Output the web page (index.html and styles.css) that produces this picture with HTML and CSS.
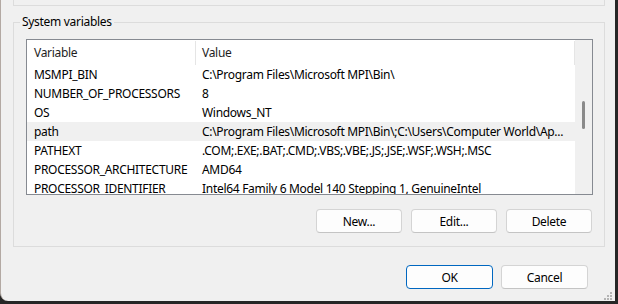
FILE: index.html
```html
<!DOCTYPE html>
<html lang="en">
<head>
  <meta charset="UTF-8">
  <meta name="viewport" content="width=device-width, initial-scale=1.0">
  <title>Environment Variables</title>
  <link rel="stylesheet" href="styles.css">
</head>
<body>
  <div class="window">
    <div class="group-top"></div>

    <fieldset class="group">
      <legend>System variables</legend>

      <div class="listview">
        <div class="list-main">
          <div class="list-header">
            <div class="col-name">Variable</div>
            <div class="col-value">Value</div>
          </div>
          <div class="row"><span class="col-name">MSMPI_BIN</span><span class="col-value">C:\Program Files\Microsoft MPI\Bin\</span></div>
          <div class="row"><span class="col-name">NUMBER_OF_PROCESSORS</span><span class="col-value">8</span></div>
          <div class="row"><span class="col-name">OS</span><span class="col-value">Windows_NT</span></div>
          <div class="row selected"><span class="col-name">path</span><span class="col-value">C:\Program Files\Microsoft MPI\Bin\;C:\Users\Computer World\Ap...</span></div>
          <div class="row"><span class="col-name">PATHEXT</span><span class="col-value">.COM;.EXE;.BAT;.CMD;.VBS;.VBE;.JS;.JSE;.WSF;.WSH;.MSC</span></div>
          <div class="row"><span class="col-name">PROCESSOR_ARCHITECTURE</span><span class="col-value">AMD64</span></div>
          <div class="row"><span class="col-name">PROCESSOR_IDENTIFIER</span><span class="col-value">Intel64 Family 6 Model 140 Stepping 1, GenuineIntel</span></div>
        </div>
        <div class="scrollbar"><div class="thumb"></div></div>
      </div>

      <div class="buttons">
        <button class="btn">New...</button>
        <button class="btn">Edit...</button>
        <button class="btn">Delete</button>
      </div>
    </fieldset>

    <div class="dialog-buttons">
      <button class="btn default">OK</button>
      <button class="btn">Cancel</button>
    </div>

    <svg class="grip" width="9" height="9" viewBox="0 0 9 9">
      <rect x="7" y="1" width="2" height="2" fill="#b4b4b4"/>
      <rect x="4" y="4" width="2" height="2" fill="#b4b4b4"/>
      <rect x="7" y="4" width="2" height="2" fill="#b4b4b4"/>
      <rect x="1" y="7" width="2" height="2" fill="#b4b4b4"/>
      <rect x="4" y="7" width="2" height="2" fill="#b4b4b4"/>
      <rect x="7" y="7" width="2" height="2" fill="#b4b4b4"/>
    </svg>
  </div>
</body>
</html>
```

FILE: styles.css
```css
html, body {
  margin: 0;
  height: 100%;
  background-color: #262626;
  overflow: hidden;
}
body {
  font-family: 'Noto Sans', 'Open Sans', sans-serif;
  font-size: 12px;
  letter-spacing: -0.3px;
  color: #000;
}
.window {
  position: relative;
  width: 614px;
  height: 301px;
  background-color: #f0f0f0;
  border-left: 1px solid #b3a9a3;
  border-bottom-left-radius: 8px;
}
.group-top {
  height: 5px;
  margin: 0 10px 0 12px;
  border: 1px solid #dcdcdc;
  border-top: none;
}
.group {
  margin: 8px 10px 0 12px;
  padding: 9px 11px 13px 12px;
  border: 1px solid #dcdcdc;
  min-width: 0;
}
.group legend {
  line-height: 16px;
  padding: 0 2px;
  margin-left: -6px;
  color: #000;
}
.listview {
  display: flex;
  height: 154px;
  border: 1px solid #868a91;
  background-color: #fff;
}
.list-main {
  width: 548px;
  overflow: hidden;
}
.list-header {
  display: flex;
  height: 25px;
  color: #1e1e1e;
}
.list-header .col-name,
.list-header .col-value {
  margin-top: 1px;
  line-height: 23px;
  border-right: 1px solid #e5e5e5;
}
.list-header .col-name {
  width: 161px;
}
.list-header .col-value {
  width: 372px;
}
.col-name {
  padding-left: 7px;
  flex-shrink: 0;
}
.col-value {
  padding-left: 6px;
  white-space: nowrap;
}
.row {
  display: flex;
  height: 19px;
  line-height: 20px;
  white-space: nowrap;
}
.row .col-name {
  width: 162px;
}
.row.selected {
  background-color: #f0f0f0;
}
.scrollbar {
  width: 17px;
  background-color: #f0f0f0;
}
.thumb {
  width: 3px;
  height: 28px;
  margin: 61px 0 0 7px;
  background-color: #8a8a8a;
  border-radius: 2px;
}
.buttons {
  display: flex;
  justify-content: flex-end;
  gap: 9px;
  margin: 14px 1px 0 0;
}
.btn {
  width: 86px;
  height: 24px;
  padding: 0;
  font-family: inherit;
  font-size: 12px;
  letter-spacing: -0.3px;
  color: #000;
  background-color: #fdfdfd;
  border: 1px solid #d4d4d4;
  border-bottom-color: #c4c4c4;
  border-radius: 4px;
}
.dialog-buttons {
  display: flex;
  justify-content: flex-end;
  gap: 8px;
  margin: 18px 27px 0 0;
}
.dialog-buttons .btn {
  width: 87px;
}
.btn.default {
  border-color: #0067c0;
}
.grip {
  position: absolute;
  right: 3px;
  bottom: 1px;
}
```
